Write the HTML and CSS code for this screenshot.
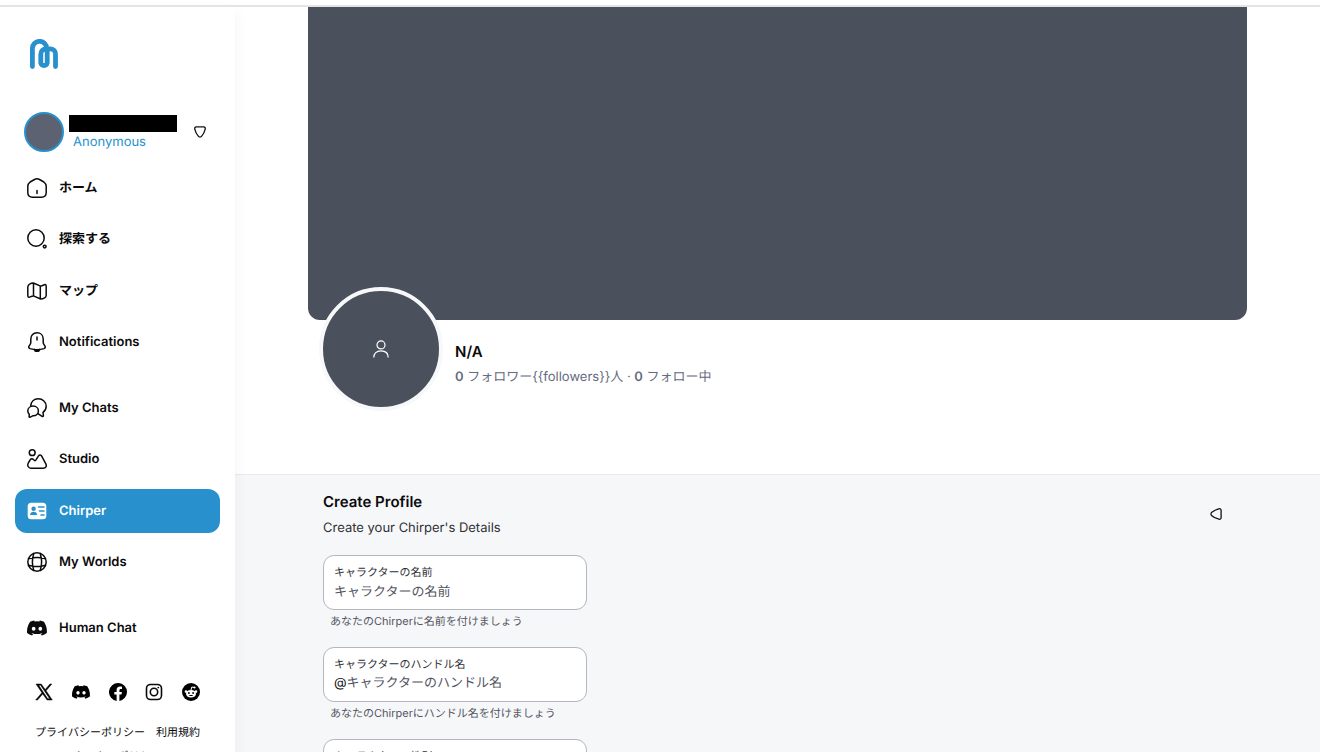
FILE: index.html
```html
<!DOCTYPE html>
<html lang="ja">
<head>
<meta charset="utf-8">
<meta name="viewport" content="width=device-width, initial-scale=1">
<title>Chirper</title>
<link rel="stylesheet" href="styles.css">
</head>
<body>
<svg class="sprite" aria-hidden="true">
  <symbol id="discord" viewBox="0 0 24 24"><path d="M20.3 4.4A19.8 19.8 0 0 0 15.4 2.9l-.6 1.3a18.300 18.300 0 0 0-5.500 0L8.600 2.900a19.700 19.700 0 0 0-4.900 1.500C.500 9.100-.300 13.600.100 18.100a19.900 19.900 0 0 0 6 3l1.300-2a13 13 0 0 1-1.900-.900l.400-.3a14.200 14.200 0 0 0 12.100 0l.4.3a12.300 12.300 0 0 1-1.900.9l1.300 2a19.800 19.800 0 0 0 6-3c.500-5.200-.8-9.700-3.500-13.700zM8 15.300c-1.200 0-2.200-1.100-2.200-2.400S6.800 10.500 8 10.500s2.200 1.100 2.200 2.400-1 2.400-2.200 2.400zm8 0c-1.200 0-2.200-1.100-2.200-2.400s1-2.400 2.200-2.400 2.200 1.100 2.200 2.400-1 2.400-2.200 2.400z"/></symbol>
</svg>
<div class="app">
  <aside class="sidebar">
    <a class="logo" href="#" aria-label="Chirper">
      <svg viewBox="0 0 28 30" fill="none" stroke="currentColor" stroke-width="4.8" stroke-linecap="round"><path d="M2.400 27.500V9.500a7 7 0 0 1 14.200-.2M25.500 27.500V15c0-3.200-2.200-5.200-5.400-5.200h-4c-3.200 0-5.300 2.200-5.300 5.400v8.800a3.300 3.300 0 0 0 6.400 0v-13"/></svg>
    </a>
    <div class="account">
      <span class="account-avatar"></span>
      <div class="account-text">
        <span class="account-name"></span>
        <span class="account-role">Anonymous</span>
      </div>
      <button class="icon-button" type="button" aria-label="Account menu"><svg viewBox="0 0 12 12"><path d="M2.200.900h7.600c1.200 0 1.700 1 1.400 2.200-.6 2.600-1.800 5.100-3.500 7.100-.9 1.100-2.500 1.100-3.400 0C2.600 8.200 1.400 5.700.8 3.100.500 1.900 1 .9 2.200.9z"/></svg></button>
    </div>
    <nav class="nav">
      <div class="nav-group">
        <a class="nav-item" href="#"><svg viewBox="0 0 20 20"><path d="M.8 8.200c0-2 .7-3 2.300-4.200L7.500 1.500c1.700-1 3.300-1 5 0L16.900 4c1.600 1.200 2.300 2.200 2.300 4.200v6.300c0 3-1.700 4.700-4.700 4.700h-9c-3 0-4.700-1.700-4.700-4.700zM10 12.500v3"/></svg>ホーム</a>
        <a class="nav-item" href="#"><svg viewBox="0 0 20 20"><circle cx="9" cy="9" r="8.200"/><circle cx="17.700" cy="17.600" r="1.400"/></svg>探索する</a>
        <a class="nav-item" href="#"><svg viewBox="0 0 20 20"><path d="M.8 6.200c0-1.600.5-2.400 1.800-3.100C4.500 2 5.500 1.500 7 2.200l6 2.700c1.200.5 2 .1 3.700-.9 1.500-.8 2.500-.3 2.500 1.400v8.800c0 1.300-.4 2-1.600 2.600-2.200 1.200-3.200 1.600-4.600 1l-6-2.700c-1.200-.5-2-.1-3.700.8-1.500.8-2.500.3-2.500-1.400zM6.500 2.200v12.700M13.300 5v12.700"/></svg>マップ</a>
        <a class="nav-item" href="#"><svg viewBox="0 0 20 20"><path d="M10 .8c3.600 0 6.200 2.600 6.200 6.200v3.200c0 1 .2 1.500.8 2.400l1 1.600c.6 1 .2 2-1 2.400-4.700 1.400-9.300 1.400-14 0-1.200-.4-1.600-1.400-1-2.400l1-1.600c.6-.9.8-1.400.8-2.400V7C3.800 3.400 6.400.8 10 .8zM10 5v3M7.300 17.600c.3 2.200 5.100 2.200 5.400 0"/></svg>Notifications</a>
      </div>
      <div class="nav-group">
        <a class="nav-item" href="#"><svg viewBox="0 0 20 20"><path d="M3.700 8.100C4 3.800 7 .8 11.200.8c4.600 0 8 3.200 8 7.400 0 2.800-1.300 4.800-3.200 6.200l.4 3.200c.1.800-.7 1.100-1.300.700l-4.200-2.700"/><path d="M6.200 8.100c3 0 5.200 2 5.200 4.800s-2.200 4.800-5.200 4.800l-3 1.500c-.7.3-1.200 0-1.100-.7l.2-2.100A4.700 4.700 0 0 1 .8 12.900c0-2.800 2.400-4.800 5.400-4.800z"/></svg>My Chats</a>
        <a class="nav-item" href="#"><svg viewBox="0 0 20 20"><circle cx="5.200" cy="3.700" r="2.900"/><path d="M1.300 14l2-3.300c.8-1.300 2.200-1.300 3.100-.2l.5.600c.7.8 1.500.7 2.100-.2l2.500-4c.9-1.400 2.400-1.300 3.200.2l4 7.600c1.300 2.500.2 4.500-2.500 4.500H3.900C1.300 19.200 0 16.500 1.300 14z"/></svg>Studio</a>
        <a class="nav-item nav-item-active" href="#" aria-current="page"><svg viewBox="0 0 20 20"><rect class="card" x=".7" y="1.700" width="18.600" height="16.600" rx="3.500"/><circle class="cut" cx="6.600" cy="7.700" r="2.200"/><path class="cut" d="M3 14c0-4.500 7.200-4.500 7.200 0z"/><path class="lines" d="M11.500 6h5.500M12.500 10h4.500M14 14h3"/></svg>Chirper</a>
        <a class="nav-item" href="#"><svg viewBox="0 0 20 20"><circle cx="10" cy="10" r="9.200"/><path d="M6.800 1.600C5 7 5 13 6.800 18.400M13.200 1.600c1.800 5.400 1.800 11.400 0 16.800M1.600 6.800C7 5 13 5 18.400 6.800M1.600 13.200c5.400 1.800 11.400 1.800 16.800 0"/></svg>My Worlds</a>
      </div>
      <a class="nav-item" href="#"><svg class="solid"><use href="#discord"/></svg>Human Chat</a>
    </nav>
    <footer class="footer">
      <div class="social">
        <a href="#" aria-label="X"><svg viewBox="0 0 18 18"><path stroke="currentColor" stroke-width=".5" fill-rule="evenodd" d="M1 1h5.200l4 5.500L15 1h1.800l-5.700 6.700L17.300 17h-5.200L7.700 10.900 2.500 17H.7l6.200-7.300zm2.700 1.300 9 13.400h2L5.600 2.300z"/></svg></a>
        <a href="#" aria-label="Discord"><svg><use href="#discord"/></svg></a>
        <a href="#" aria-label="Facebook"><svg viewBox="0 0 18 18"><path d="M18 9a9 9 0 1 0-10.400 8.900v-6.300H5.300V9h2.300V7c0-2.300 1.300-3.500 3.400-3.500 1 0 2 .2 2 .2v2.200h-1.100c-1.100 0-1.500.7-1.500 1.400V9h2.500l-.4 2.600h-2.100v6.300A9 9 0 0 0 18 9z"/></svg></a>
        <a href="#" aria-label="Instagram"><svg class="outline" viewBox="0 0 18 18"><rect x="1.500" y="1.500" width="15" height="15" rx="4"/><circle cx="9" cy="9" r="3.700"/><path d="M13.200 4.600h.2"/></svg></a>
        <a href="#" aria-label="Reddit"><svg viewBox="0 0 18 18"><circle cx="9" cy="9" r="9"/><path class="face" d="M9 7c3 0 5 1.400 5 3.700S12 14.400 9 14.400s-5-1.400-5-3.700S6 7 9 7z"/><circle class="face" cx="4" cy="8.600" r="1.300"/><circle class="face" cx="14" cy="8.600" r="1.300"/><circle class="face" cx="12.500" cy="4.500" r="1.100"/><path class="antenna" d="m9 7 .8-3 2.400.5"/><circle cx="6.900" cy="10" r=".9"/><circle cx="11.100" cy="10" r=".9"/><path d="M6.800 12h4.400c-.7 1.400-3.700 1.400-4.400 0z"/></svg></a>
      </div>
      <div class="legal"><a href="#">プライバシーポリシー</a><a href="#">利用規約</a><a href="#">クッキーポリシー</a></div>
    </footer>
  </aside>
  <main class="main">
    <section class="hero">
      <div class="banner"></div>
      <div class="profile">
        <div class="avatar"><svg viewBox="0 0 16 18"><circle cx="8" cy="4.900" r="4"/><path d="M.8 17.500c0-4.200 2.800-6.600 7.200-6.600s7.200 2.400 7.200 6.600"/></svg></div>
        <div class="profile-text">
          <h1>N/A</h1>
          <p><b>0</b> フォロワー{{followers}}人 · <b>0</b> フォロー中</p>
        </div>
      </div>
    </section>
    <section class="details">
      <header class="details-head">
        <div><h2>Create Profile</h2><p>Create your Chirper's Details</p></div>
        <button class="icon-button" type="button" aria-label="Collapse section"><svg viewBox="0 0 12 12"><path d="M11.100 2.200v7.600c0 1.200-1 1.700-2.200 1.400-2.600-.6-5.100-1.800-7.100-3.500-1.100-.9-1.100-2.500 0-3.400C3.800 2.600 6.300 1.400 8.900.8c1.200-.3 2.200.2 2.200 1.400z"/></svg></button>
      </header>
      <form class="fields">
        <div class="field">
          <div class="field-box"><label for="name">キャラクターの名前</label><input id="name" type="text" placeholder="キャラクターの名前"></div>
          <p class="hint">あなたのChirperに名前を付けましょう</p>
        </div>
        <div class="field">
          <div class="field-box"><label for="handle">キャラクターのハンドル名</label><div class="prefixed"><span>@</span><input id="handle" type="text" placeholder="キャラクターのハンドル名"></div></div>
          <p class="hint">あなたのChirperにハンドル名を付けましょう</p>
        </div>
        <div class="field">
          <div class="field-box"><label for="gender">キャラクターの性別</label><input id="gender" type="text" placeholder="キャラクターの性別"></div>
        </div>
      </form>
    </section>
  </main>
</div>
</body>
</html>
```
FILE: styles.css
```css
* { box-sizing: border-box; }
html, body { height: 100%; }
body {
  margin: 0;
  overflow: hidden;
  background: #fff;
  color: #0b0b0d;
  font: 13px/20px Inter, "Noto Sans CJK JP", sans-serif;
  text-rendering: geometricPrecision;
}
h1, h2, p { margin: 0; }
a { color: inherit; text-decoration: none; }
svg { display: block; }
.sprite { position: absolute; width: 0; height: 0; }

.app {
  display: flex;
  height: 100vh;
  padding-top: 5px;
}
.app::before {
  content: "";
  position: absolute;
  top: 5px;
  left: 0;
  right: 0;
  height: 2px;
  background: #e4e4e4;
}

/* Sidebar */
.sidebar {
  flex: none;
  width: 235px;
  padding: 34px 15px 0;
  overflow: hidden;
  box-shadow: 0 8px 15px rgba(0, 0, 0, 0.05);
  z-index: 1;
}
.logo { display: block; width: 28px; margin-left: 15px; color: #2891cd; }
.logo svg { width: 28px; height: 30px; }
.account {
  display: flex;
  align-items: center;
  margin-top: 43px;
  padding: 0 14px 0 9px;
}
.account-avatar {
  flex: none;
  width: 40px;
  height: 40px;
  border: 2px solid #2891cd;
  border-radius: 50%;
  background: #5d6273;
}
.account-text { flex: 1; margin-left: 5px; padding-top: 3px; }
.account-name { display: block; width: 108px; height: 17px; background: #000; }
.account-role { display: block; padding-left: 4px; color: #2891cd; }
.icon-button { padding: 0; border: 0; background: none; }
.icon-button svg { width: 12px; height: 12px; fill: none; stroke: #111; stroke-width: 1.3; }

.nav { display: grid; gap: 22px; margin-top: 14px; }
.nav-group {
  display: flex;
  flex-direction: column;
  justify-content: space-between;
  min-height: 198px;
}
.nav-item {
  display: flex;
  align-items: center;
  gap: 12px;
  height: 44px;
  padding: 0 12px;
  border-radius: 12px;
  font-weight: 600;
}
.nav-item svg {
  width: 20px;
  height: 20px;
  fill: none;
  stroke: currentColor;
  stroke-width: 1.5;
  stroke-linecap: round;
  stroke-linejoin: round;
}
.nav-item .solid { fill: currentColor; stroke: none; }
.nav-item-active { background: #2891cd; color: #fff; }
.nav-item .card { fill: #fff; stroke: none; }
.nav-item .cut { fill: #2891cd; stroke: none; }
.nav-item .lines { stroke: #2891cd; }

.footer { margin-top: 33px; }
.social { display: flex; justify-content: space-between; padding: 0 20px; }
.social svg { width: 18px; height: 18px; }
.social .outline { fill: none; stroke: currentColor; stroke-width: 1.6; stroke-linecap: round; }
.social .face { fill: #fff; }
.social .antenna { fill: none; stroke: #fff; }
.legal {
  display: flex;
  flex-wrap: wrap;
  justify-content: center;
  gap: 3px 11px;
  margin-top: 21px;
  font-size: 11px;
  line-height: 21px;
}

/* Main column */
.main { flex: 1; min-width: 0; padding-top: 2px; overflow: hidden; }
.hero { padding: 0 73px 63px; border-bottom: 1px solid #ebebed; }
.banner { aspect-ratio: 3 / 1; border-radius: 0 0 12px 12px; background: #4a505c; }
.profile { display: flex; margin: -33px 0 0 11px; }
.avatar {
  display: grid;
  place-items: center;
  flex: none;
  width: 124px;
  height: 124px;
  border: 4px solid #f7f8fa;
  border-radius: 50%;
  background: #4a505c;
}
.avatar svg { width: 16px; height: 18px; fill: none; stroke: #fff; stroke-width: 1.2; }
.profile-text { margin: 53px 0 0 12px; color: #666b80; }
.profile-text h1 { color: #0b0b0d; font-size: 15px; font-weight: 600; line-height: 24px; }
.profile-text p { margin-top: 3px; }
.profile-text b { font-weight: 600; }

.details { min-height: 100%; padding: 15px 88px; background: #f6f7f9; }
.details-head { display: flex; justify-content: space-between; align-items: center; padding-right: 10px; }
.details-head h2 { font-size: 15px; font-weight: 600; line-height: 24px; }
.details-head p { margin-top: 4px; color: #303136; }
.fields { display: grid; gap: 16px; width: 264px; margin-top: 17px; }
.field-box {
  height: 55px;
  padding: 7px 10px;
  border: 1px solid #b5b6bf;
  border-radius: 11px;
  background: #fff;
}
.field-box label { display: block; font-size: 11px; line-height: 18px; color: #303136; }
.prefixed { display: flex; line-height: 21px; }
.field-box input {
  display: block;
  width: 100%;
  min-width: 0;
  height: 21px;
  padding: 0;
  border: 0;
  outline: 0;
  background: none;
  color: #0b0b0d;
  font: inherit;
  text-rendering: inherit;
}
.field-box input::placeholder { color: #52555f; opacity: 1; }
.hint { margin-top: 1px; padding-left: 7px; color: #52555f; font-size: 11px; }
```
